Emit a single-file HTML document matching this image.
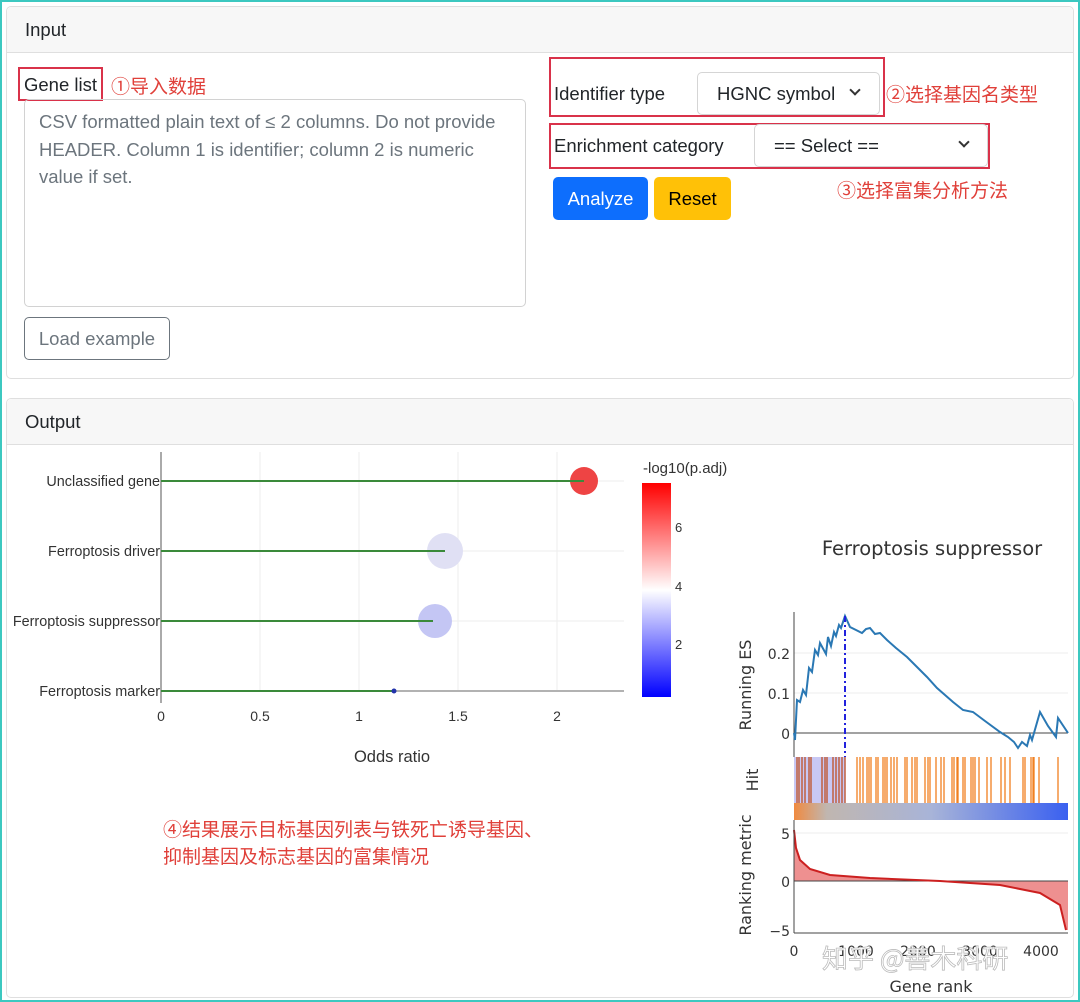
<!DOCTYPE html>
<html><head><meta charset="utf-8"><style>
*{box-sizing:border-box;margin:0;padding:0}
body{width:1080px;height:1002px;background:#fff;font-family:"Liberation Sans","Noto Sans CJK SC",sans-serif;position:relative;overflow:hidden;color:#212529}
.frame{position:absolute;left:0;top:0;width:1080px;height:1002px;border:2px solid #3cc8c0}
.card{position:absolute;left:6px;width:1068px;border:1px solid #dfdfdf;border-radius:5px;background:#fff}
.hdr{background:#f7f7f7;border-bottom:1px solid #dfdfdf;height:46px;padding-left:18px;font-size:18.5px;line-height:46px;border-radius:5px 5px 0 0}
.abs{position:absolute}
.red{color:#e0403a;font-size:19px}
.rb{position:absolute;border:2px solid #d9324a}
.sel{position:absolute;border:1px solid #d5d5d5;border-radius:5px;background:#fff;font-size:18.5px}
.chev{position:absolute;width:8px;height:8px;border-right:2px solid #333;border-bottom:2px solid #333;transform:rotate(45deg)}
</style></head><body>
<div class="frame"></div>
<div class="card" style="top:6px;height:373px"><div class="hdr">Input</div></div>
<div class="card" style="top:398px;height:600px"><div class="hdr">Output</div></div>

<div class="rb" style="left:18px;top:67px;width:85px;height:34px"></div>
<div class="abs" style="left:24px;top:74px;font-size:18.5px">Gene list</div>
<div class="abs red" style="left:111px;top:72px">①导入数据</div>
<div class="abs" style="left:24px;top:99px;width:502px;height:208px;border:1px solid #d2d2d2;border-radius:5px"></div>
<div class="abs" style="left:39px;top:108px;width:480px;font-size:18.5px;line-height:27.5px;color:#6c757d">CSV formatted plain text of ≤ 2 columns. Do not provide HEADER. Column 1 is identifier; column 2 is numeric value if set.</div>
<div class="abs" style="left:24px;top:317px;width:146px;height:43px;border:1px solid #6c757d;border-radius:5px;font-size:18.5px;color:#6c757d;line-height:41px;text-align:center">Load example</div>

<div class="rb" style="left:549px;top:57px;width:336px;height:60px"></div>
<div class="abs" style="left:554px;top:83px;font-size:18.5px">Identifier type</div>
<div class="sel" style="left:697px;top:72px;width:183px;height:43px;line-height:41px;padding-left:19px">HGNC symbol<span class="chev" style="left:153px;top:13px"></span></div>
<div class="red abs" style="left:886px;top:80px">②选择基因名类型</div>
<div class="rb" style="left:549px;top:123px;width:441px;height:46px"></div>
<div class="abs" style="left:554px;top:135px;font-size:18.5px">Enrichment category</div>
<div class="sel" style="left:754px;top:124px;width:234px;height:43px;line-height:41px;padding-left:19px">== Select ==<span class="chev" style="left:205px;top:13px"></span></div>
<div class="red abs" style="left:837px;top:176px">③选择富集分析方法</div>
<div class="abs" style="left:553px;top:177px;width:95px;height:43px;background:#0d6efd;border-radius:5px;color:#fff;font-size:18.5px;line-height:43px;text-align:center">Analyze</div>
<div class="abs" style="left:654px;top:177px;width:77px;height:43px;background:#ffc107;border-radius:5px;color:#000;font-size:18.5px;line-height:43px;text-align:center">Reset</div>

<svg class="abs" style="left:0;top:0" width="1080" height="1002" font-family="Liberation Sans, DejaVu Sans, sans-serif">
<defs>
<linearGradient id="cb" x1="0" y1="1" x2="0" y2="0"><stop offset="0" stop-color="#0000ff"/><stop offset="0.5" stop-color="#ffffff"/><stop offset="1" stop-color="#ff0000"/></linearGradient>
<linearGradient id="rk" x1="0" y1="0" x2="1" y2="0"><stop offset="0" stop-color="#f08a40"/><stop offset="0.12" stop-color="#c0b6b0"/><stop offset="0.5" stop-color="#a8b4d8"/><stop offset="1" stop-color="#3a60f0"/></linearGradient>
</defs>
<g stroke="#eee" stroke-width="1">
<line x1="260" y1="452" x2="260" y2="690"/><line x1="359" y1="452" x2="359" y2="690"/><line x1="458" y1="452" x2="458" y2="690"/><line x1="557" y1="452" x2="557" y2="690"/>
<line x1="161" y1="481" x2="624" y2="481"/><line x1="161" y1="551" x2="624" y2="551"/><line x1="161" y1="621" x2="624" y2="621"/>
</g>
<line x1="161" y1="452" x2="161" y2="703" stroke="#555"/>
<line x1="161" y1="691" x2="624" y2="691" stroke="#999" stroke-width="1.5"/>
<circle cx="584" cy="481" r="14" fill="#ee4444"/>
<circle cx="445" cy="551" r="18" fill="#e0e0f4"/>
<circle cx="435" cy="621" r="17" fill="#c4c6f4"/>
<g stroke="#3a8a3a" stroke-width="2"><line x1="161" y1="481" x2="584" y2="481"/><line x1="161" y1="551" x2="445" y2="551"/><line x1="161" y1="621" x2="433" y2="621"/><line x1="161" y1="691" x2="394" y2="691"/></g>
<circle cx="394" cy="691" r="2.5" fill="#2233aa"/>
<g font-size="14.4" fill="#333" text-anchor="end">
<text x="160" y="486">Unclassified gene</text><text x="160" y="556">Ferroptosis driver</text><text x="160" y="626">Ferroptosis suppressor</text><text x="160" y="696">Ferroptosis marker</text></g>
<g font-size="14" fill="#333" text-anchor="middle">
<text x="161" y="721">0</text><text x="260" y="721">0.5</text><text x="359" y="721">1</text><text x="458" y="721">1.5</text><text x="557" y="721">2</text></g>
<text x="392" y="762" font-size="16.5" fill="#333" text-anchor="middle">Odds ratio</text>
<text x="643" y="473" font-size="15" fill="#333">-log10(p.adj)</text>
<rect x="642" y="483" width="29" height="214" fill="url(#cb)"/>
<g font-size="13" fill="#333"><text x="675" y="532">6</text><text x="675" y="591">4</text><text x="675" y="649">2</text></g>
<text x="163" y="836" font-size="19" fill="#e0403a" font-family="Liberation Sans, Noto Sans CJK SC, sans-serif">④结果展示目标基因列表与铁死亡诱导基因、</text>
<text x="163" y="863" font-size="19" fill="#e0403a" font-family="Liberation Sans, Noto Sans CJK SC, sans-serif">抑制基因及标志基因的富集情况</text>

<text x="932" y="555" font-size="19.5" fill="#333" text-anchor="middle" font-family="DejaVu Sans, sans-serif">Ferroptosis suppressor</text>
<g stroke="#eee"><line x1="794" y1="653" x2="1068" y2="653"/><line x1="794" y1="693" x2="1068" y2="693"/><line x1="794" y1="833" x2="1068" y2="833"/></g>
<line x1="794" y1="612" x2="794" y2="757" stroke="#444"/>
<line x1="794" y1="733" x2="1068" y2="733" stroke="#444"/>
<polyline fill="none" stroke="#2a78b4" stroke-width="2" points="794,733 795,740 797,700 800,702 803,690 806,695 809,668 812,672 815,650 818,655 820,643 826,654 828,637 831,646 834,632 836,636 839,625 841,628 845,616 850,627 856,630 862,633 866,629 870,628 875,634 880,633 887,640 896,648 907,657 917,667 927,677 937,688 953,702 963,710 973,712 985,721 1000,732 1008,737 1014,742 1018,748 1022,742 1027,746 1030,735 1032,740 1040,712 1048,726 1056,737 1058,718 1068,733"/>
<line x1="845" y1="616" x2="845" y2="757" stroke="#2222dd" stroke-width="2" stroke-dasharray="6,3,2,3"/>
<rect x="794" y="757" width="51" height="46" fill="#c8c8f4"/>
<g stroke="#c06040" stroke-width="1.5">
<path d="M797 757V803M799 757V803M802 757V803M805 757V803M809 757V803M811 757V803M822 757V803M825 757V803M827 757V803M833 757V803M836 757V803M839 757V803M842 757V803M845 757V803"/></g>
<g stroke="#f08020" stroke-width="1.3">
<path d="M857 757V803M860 757V803M863 757V803M867 757V803M869 757V803M871 757V803M876 757V803M878 757V803M883 757V803M885 757V803M887 757V803M891 757V803M894 757V803M897 757V803M905 757V803M907 757V803M912 757V803M915 757V803M917 757V803M925 757V803M928 757V803M930 757V803M936 757V803M941 757V803M944 757V803M952 757V803M954 757V803M957 757V803M958 757V803M963 757V803M965 757V803M971 757V803M973 757V803M975 757V803M979 757V803M987 757V803M991 757V803M1001 757V803M1005 757V803M1010 757V803M1023 757V803M1025 757V803M1031 757V803M1033 757V803M1034 757V803M1039 757V803M1058 757V803"/></g>
<rect x="794" y="803" width="274" height="17" fill="url(#rk)"/>
<path d="M794,830 L796,848 800,860 810,869 830,875 870,878 940,881 L794,881Z" fill="#ee9090"/>
<path d="M940,881 L1000,885 1040,893 1060,905 1066,930 L1068,930 1068,881Z" fill="#ee9090"/>
<line x1="794" y1="881" x2="1068" y2="881" stroke="#444"/>
<polyline fill="none" stroke="#cc2020" stroke-width="2" points="794,830 796,848 800,860 810,869 830,875 870,878 940,881 1000,885 1040,893 1060,905 1066,930"/>
<line x1="794" y1="820" x2="794" y2="933" stroke="#444"/>
<line x1="794" y1="933" x2="1068" y2="933" stroke="#444"/>
<g font-size="14" fill="#333" text-anchor="end" font-family="DejaVu Sans, sans-serif"><text x="790" y="659">0.2</text><text x="790" y="699">0.1</text><text x="790" y="739">0</text><text x="790" y="839">5</text><text x="790" y="887">0</text><text x="790" y="936">−5</text></g>
<g font-size="14" fill="#333" text-anchor="middle" font-family="DejaVu Sans, sans-serif"><text x="794" y="956">0</text><text x="856" y="956">1000</text><text x="918" y="956">2000</text><text x="980" y="956">3000</text><text x="1041" y="956">4000</text></g>
<text x="931" y="992" font-size="16" fill="#333" text-anchor="middle" font-family="DejaVu Sans, sans-serif">Gene rank</text>
<g font-size="16" fill="#333" text-anchor="middle" font-family="DejaVu Sans, sans-serif">
<text transform="translate(751,685) rotate(-90)">Running ES</text>
<text transform="translate(758,780) rotate(-90)">Hit</text>
<text transform="translate(751,875) rotate(-90)">Ranking metric</text></g>
<text x="822" y="968" font-size="26" fill="#ffffff" stroke="#bbb" stroke-width="0.8" font-family="Noto Sans CJK SC, sans-serif">知乎 @善木科研</text>
</svg>
</body></html>
